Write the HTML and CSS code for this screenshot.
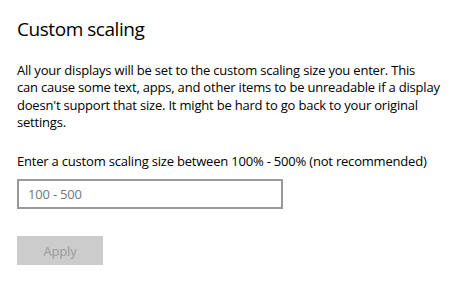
FILE: index.html
```html
<!DOCTYPE html>
<html lang="en">
<head>
<meta charset="utf-8">
<title>Custom scaling</title>
<link rel="stylesheet" href="styles.css">
</head>
<body>
<main class="page">
  <h1 class="title">Custom scaling</h1>
  <p class="desc">All your displays will be set to the custom scaling size you enter. This<br>can cause some text, apps, and other items to be unreadable if a display<br>doesn't support that size. It might be hard to go back to your original<br>settings.</p>
  <label class="label" for="scale">Enter a custom scaling size between 100% - 500% (not recommended)</label>
  <input class="field" id="scale" type="text" placeholder="100 - 500">
  <button class="apply" type="button" disabled>Apply</button>
</main>
</body>
</html>
```
FILE: styles.css
```css
html, body {
  margin: 0;
  padding: 0;
  background: #ffffff;
}
.page {
  display: flex;
  flex-direction: column;
  align-items: flex-start;
  padding: 15px 0 0 17px;
  font-family: "Open Sans", "Noto Sans", sans-serif;
  color: #000000;
}
.title {
  margin: 0;
  font-size: 19px;
  letter-spacing: -0.45px;
  font-weight: 400;
  line-height: 28px;
}
.desc {
  margin: 19px 0 0 0;
  font-size: 13px;
  letter-spacing: -0.2px;
  line-height: 17.3px;
}
.label {
  margin-top: 22px;
  font-size: 13px;
  letter-spacing: -0.2px;
  line-height: 17px;
}
.field {
  box-sizing: border-box;
  margin: 9px 0 0 0;
  width: 266px;
  height: 30px;
  border: 2px solid #999999;
  padding: 0 9px;
  font-family: inherit;
  font-size: 13px;
  letter-spacing: -0.2px;
  color: #000;
  background: #fff;
  outline: none;
}
.field::placeholder {
  color: #767676;
}
.apply {
  margin-top: 27px;
  width: 86px;
  height: 29px;
  border: none;
  background: #cccccc;
  color: #9a9a9a;
  font-family: inherit;
  font-size: 13px;
  letter-spacing: -0.2px;
  padding: 0;
}
```
